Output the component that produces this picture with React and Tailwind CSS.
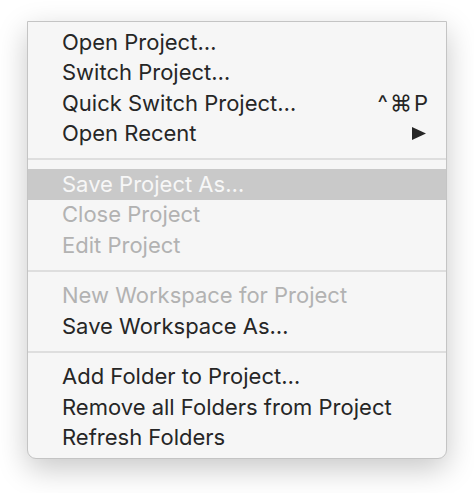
import React from 'react'

const groups = [
  [
    { label: 'Open Project…' },
    { label: 'Switch Project…' },
    { label: 'Quick Switch Project…', shortcut: '^⌘P' },
    { label: 'Open Recent', submenu: true },
  ],
  [
    { label: 'Save Project As…', active: true },
    { label: 'Close Project', disabled: true },
    { label: 'Edit Project', disabled: true },
  ],
  [
    { label: 'New Workspace for Project', disabled: true },
    { label: 'Save Workspace As…' },
  ],
  [
    { label: 'Add Folder to Project…' },
    { label: 'Remove all Folders from Project' },
    { label: 'Refresh Folders' },
  ],
]

const MenuItem = ({ item }) => {
  let color = 'text-[#262626]'
  if (item.disabled) color = 'text-[#b2b2b2]'
  if (item.active) color = 'text-[#f7f7f7]'

  return (
    <div
      className={`flex h-[30.5px] items-center justify-between pl-[34px] pr-[16px] ${color} ${item.active ? 'bg-[#c9c9c9]' : ''}`}
    >
      <span>{item.label}</span>
      {item.shortcut && <span className="tracking-[2px]">{item.shortcut}</span>}
      {item.submenu && (
        <svg width="14" height="13" viewBox="0 0 14 13" className="mr-[4px]">
          <path d="M0 0 L14 6.5 L0 13 Z" fill="#262626" />
        </svg>
      )}
    </div>
  )
}

const App = () => {
  return (
    <div className="min-h-[493px] w-[474px] bg-white pl-[27px] pt-[21px]">
      <div
        className="w-[420px] rounded-b-[9px] border border-[#c4c4c4] bg-[#f6f6f6] pb-[5px] pt-[5px] text-[22px] shadow-[0_10px_30px_rgba(0,0,0,0.22)]"
        style={{ fontFamily: 'Inter, "Liberation Sans", Arial, sans-serif' }}
      >
        {groups.map((group, gi) => (
          <div key={gi}>
            {gi > 0 && (
              <div className="flex h-[20px] items-center">
                <div className="h-[2px] w-full bg-[#dedede]" />
              </div>
            )}
            {group.map((item) => (
              <MenuItem key={item.label} item={item} />
            ))}
          </div>
        ))}
      </div>
    </div>
  )
}

export default App
